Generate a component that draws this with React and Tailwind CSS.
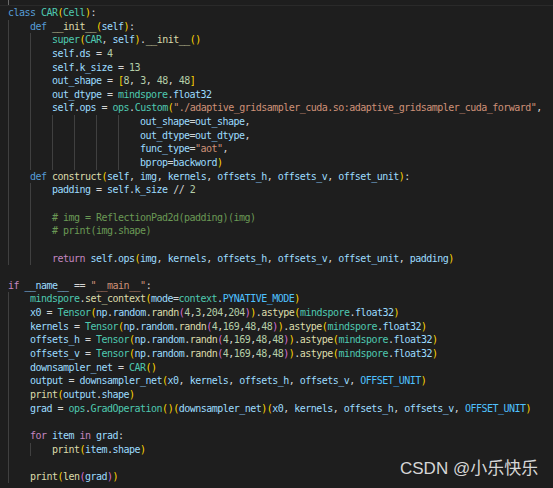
import React from 'react';

const CODE = `class CAR(Cell):
    def __init__(self):
        super(CAR, self).__init__()
        self.ds = 4
        self.k_size = 13
        out_shape = [8, 3, 48, 48]
        out_dtype = mindspore.float32
        self.ops = ops.Custom("./adaptive_gridsampler_cuda.so:adaptive_gridsampler_cuda_forward",
                        out_shape=out_shape,
                        out_dtype=out_dtype,
                        func_type="aot",
                        bprop=backword)
    def construct(self, img, kernels, offsets_h, offsets_v, offset_unit):
        padding = self.k_size // 2

        # img = ReflectionPad2d(padding)(img)
        # print(img.shape)

        return self.ops(img, kernels, offsets_h, offsets_v, offset_unit, padding)

if __name__ == "__main__":
    mindspore.set_context(mode=context.PYNATIVE_MODE)
    x0 = Tensor(np.random.randn(4,3,204,204)).astype(mindspore.float32)
    kernels = Tensor(np.random.randn(4,169,48,48)).astype(mindspore.float32)
    offsets_h = Tensor(np.random.randn(4,169,48,48)).astype(mindspore.float32)
    offsets_v = Tensor(np.random.randn(4,169,48,48)).astype(mindspore.float32)
    downsampler_net = CAR()
    output = downsampler_net(x0, kernels, offsets_h, offsets_v, OFFSET_UNIT)
    print(output.shape)
    grad = ops.GradOperation()(downsampler_net)(x0, kernels, offsets_h, offsets_v, OFFSET_UNIT)

    for item in grad:
        print(item.shape)

    print(len(grad))`;

const KEYWORDS = new Set(['class', 'def']);
const CONTROL = new Set(['if', 'for', 'in', 'return']);
const TYPES = new Set(['CAR', 'Cell', 'super', 'Tensor', 'Custom', 'GradOperation', 'mindspore', 'ops', 'context']);
const FUNCS = new Set(['__init__', 'construct', 'randn', 'astype', 'set_context', 'print', 'len']);
const CONSTS = new Set(['PYNATIVE_MODE', 'OFFSET_UNIT']);
const BRACKETS = ['#ffd700', '#da70d6', '#179fff'];

// tiny python highlighter, enough for this snippet
function tokenize(lines) {
    let depth = 0;
    return lines.map((line) => {
        const out = [];
        const re = /(#.*$)|("[^"]*")|([A-Za-z_]\w*)|(\d+)|([()[\]{}])|(\s+)|(.)/g;
        let m;
        while ((m = re.exec(line)) !== null) {
            const t = m[0];
            let color = '#d4d4d4';
            if (m[1]) color = '#6a9955';
            else if (m[2]) color = '#ce9178';
            else if (m[3]) {
                const prev = out.slice(-2).map((x) => x.t).join('');
                if (KEYWORDS.has(t)) color = '#569cd6';
                else if (CONTROL.has(t)) color = '#c586c0';
                else if (CONSTS.has(t)) color = '#4fc1ff';
                else if (prev === 'self.' && t === 'ops') color = '#9cdcfe';
                else if (TYPES.has(t)) color = '#4ec9b0';
                else if (FUNCS.has(t)) color = '#dcdcaa';
                else color = '#9cdcfe';
            } else if (m[4]) color = '#b5cea8';
            else if (m[5]) {
                if ('([{'.includes(t)) {
                    color = BRACKETS[depth % 3];
                    depth++;
                } else {
                    depth--;
                    color = BRACKETS[depth % 3];
                }
            }
            out.push({ t, color });
        }
        return out;
    });
}

const rawLines = CODE.split('\n');
const indents = rawLines.map((l) => (l.trim() ? l.length - l.trimStart().length : -1));

function guideCount(i) {
    if (indents[i] >= 0) return indents[i] / 4;
    let a = i - 1;
    while (a >= 0 && indents[a] < 0) a--;
    let b = i + 1;
    while (b < indents.length && indents[b] < 0) b++;
    const up = a >= 0 ? indents[a] : 0;
    const down = b < indents.length ? indents[b] : 0;
    return Math.min(up, down) / 4;
}

const tokens = tokenize(rawLines.map((l) => l.trimStart()));

function CodeLine({ index }) {
    const guides = guideCount(index);
    return (
        <div className="flex h-[13.65px] leading-[13.65px]">
            {Array.from({ length: guides }).map((_, g) => (
                <span key={g} className="inline-block w-[22px] h-full shrink-0 border-l border-[#404040]" />
            ))}
            <span className="whitespace-pre">
                {tokens[index].map((tok, k) => (
                    <span key={k} style={{ color: tok.color }}>{tok.t}</span>
                ))}
            </span>
        </div>
    );
}

export default function App() {
    return (
        <div className="relative w-[553px] h-[488px] overflow-hidden bg-[#1e1e1e]">
            {/* bit of the previous line's guide and the top edge */}
            <div className="h-[6px] pl-[8px] border-b border-[#2a2a2a]">
                <div className="w-px h-full bg-[#6a6a6a]" />
            </div>

            <div
                className="pl-[8px] text-[10px] tracking-[-0.52px] text-[#d4d4d4]"
                style={{ fontFamily: '"DejaVu Sans Mono", "Liberation Mono", monospace' }}
            >
                {rawLines.map((_, i) => (
                    <CodeLine key={i} index={i} />
                ))}
            </div>

            {/* watermark */}
            <div
                className="absolute left-[400px] top-[458px] text-[17px] leading-[22px] text-[#d6d6d6]"
                style={{ fontFamily: '"Liberation Sans", "Noto Sans CJK SC", sans-serif' }}
            >
                CSDN @小乐快乐
            </div>
        </div>
    );
}
